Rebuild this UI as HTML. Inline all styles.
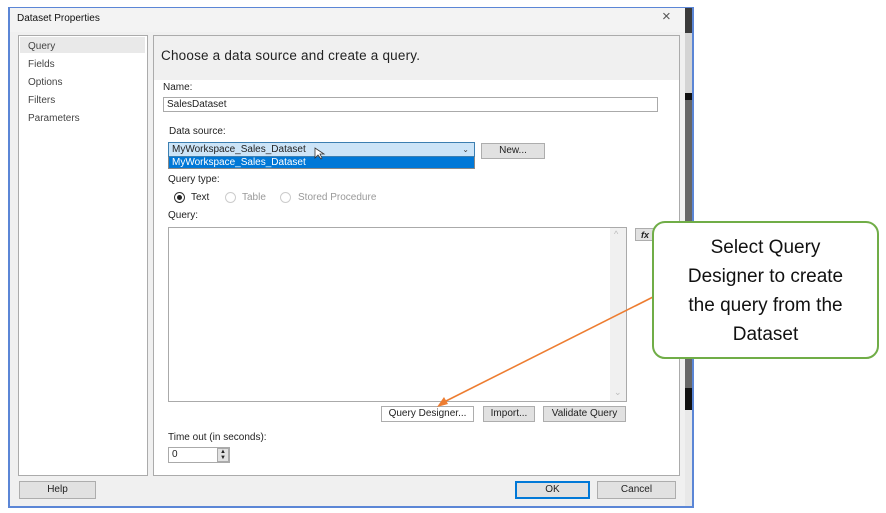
<!DOCTYPE html>
<html><head><style>
*{margin:0;padding:0;box-sizing:border-box}
body{width:886px;height:513px;background:#fff;position:relative;overflow:hidden;font-family:"Liberation Sans",sans-serif;font-size:10px;color:#222}
.a{position:absolute}
.btn{position:absolute;background:#e1e1e1;border:1px solid #adadad;text-align:center;font-size:10px;line-height:14px;color:#222}
.rad{position:absolute;width:11px;height:11px;border:1px solid #ccc;border-radius:50%;background:#fff}
</style></head><body>
<div class="a" style="left:8px;top:7px;width:686px;height:501px;border:2px solid #5b86d6;border-top-width:1px;background:#f0f0f0"></div>
<div class="a" style="left:10px;top:8px;width:675px;height:24px;background:#f3f3f3"></div>
<div class="a" style="left:17px;top:13px;font-size:10px;color:#111">Dataset Properties</div>
<div class="a" style="left:662px;top:8px;font-size:15px;color:#555">×</div>
<div class="a" style="left:685px;top:8px;width:7px;height:25px;background:#3a3a3a"></div>
<div class="a" style="left:685px;top:33px;width:7px;height:60px;background:#d4d4d4"></div>
<div class="a" style="left:685px;top:93px;width:7px;height:7px;background:#111"></div>
<div class="a" style="left:685px;top:100px;width:7px;height:288px;background:#666"></div>
<div class="a" style="left:685px;top:388px;width:7px;height:22px;background:#111"></div>
<div class="a" style="left:685px;top:410px;width:7px;height:96px;background:#e8e8e8"></div>
<div class="a" style="left:18px;top:35px;width:130px;height:441px;background:#fff;border:1px solid #ababab"></div>
<div class="a" style="left:20px;top:37px;width:125px;height:16px;background:#e9e9e9"></div>
<div class="a" style="left:28px;top:38px;line-height:18px;color:#444">Query<br>Fields<br>Options<br>Filters<br>Parameters</div>
<div class="a" style="left:153px;top:35px;width:527px;height:441px;background:#fff;border:1px solid #ababab"></div>
<div class="a" style="left:154px;top:36px;width:525px;height:44px;background:#f0f0f0"></div>
<div class="a" style="left:161px;top:48px;font-size:13.5px;color:#222;letter-spacing:0.2px">Choose a data source and create a query.</div>
<div class="a" style="left:163px;top:82px">Name:</div>
<div class="a" style="left:163px;top:97px;width:495px;height:15px;border:1px solid #aaa;background:#fff;padding-left:3px;line-height:13px">SalesDataset</div>
<div class="a" style="left:169px;top:126px">Data source:</div>
<div class="a" style="left:168px;top:142px;width:307px;height:15px;border:1px solid #3c7fb1;background:#cce4f7;padding-left:3px;line-height:13px">MyWorkspace_Sales_Dataset<span style="position:absolute;right:5px;top:0;color:#444;font-size:8px">⌄</span></div>
<div class="a" style="left:168px;top:157px;width:307px;height:12px;background:#0078d7;color:#fff;padding-left:3px;line-height:12px;border:1px solid #888;border-top:none">MyWorkspace_Sales_Dataset</div>
<svg class="a" style="left:314px;top:147px" width="12" height="14"><path d="M1 1 L1 11 L4 8 L7 12 L8 11 L6 7 L10 7 Z" fill="#fff" stroke="#333" stroke-width="0.8"/></svg>
<div class="btn" style="left:481px;top:143px;width:64px;height:16px">New...</div>
<div class="a" style="left:168px;top:174px">Query type:</div>
<div class="rad" style="left:174px;top:192px;border-color:#333"><div style="position:absolute;left:2px;top:2px;width:5px;height:5px;border-radius:50%;background:#222"></div></div>
<div class="a" style="left:191px;top:192px">Text</div>
<div class="rad" style="left:225px;top:192px"></div>
<div class="a" style="left:242px;top:192px;color:#999">Table</div>
<div class="rad" style="left:280px;top:192px"></div>
<div class="a" style="left:298px;top:192px;color:#999">Stored Procedure</div>
<div class="a" style="left:168px;top:210px">Query:</div>
<div class="a" style="left:168px;top:227px;width:459px;height:175px;border:1px solid #aaa;background:#fff"></div>
<div class="a" style="left:610px;top:228px;width:16px;height:173px;background:#f0f0f0"></div>
<div class="a" style="left:614px;top:229px;color:#bbb;font-size:9px">^</div>
<div class="a" style="left:614px;top:387px;color:#bbb;font-size:9px">⌄</div>
<div class="btn" style="left:635px;top:228px;width:20px;height:13px;line-height:12px;font-style:italic;font-weight:bold;font-size:9px">fx</div>
<div class="btn" style="left:381px;top:406px;width:93px;height:16px;background:#fff">Query Designer...</div>
<div class="btn" style="left:483px;top:406px;width:52px;height:16px">Import...</div>
<div class="btn" style="left:543px;top:406px;width:83px;height:16px">Validate Query</div>
<div class="a" style="left:168px;top:432px">Time out (in seconds):</div>
<div class="a" style="left:168px;top:447px;width:62px;height:16px;border:1px solid #aaa;background:#fff;padding-left:3px;line-height:14px">0</div>
<div class="a" style="left:217px;top:448px;width:12px;height:14px;background:#e1e1e1;border:1px solid #aaa;font-size:6px;line-height:6px;text-align:center">▲<br>▼</div>
<div class="btn" style="left:19px;top:481px;width:77px;height:18px;line-height:16px">Help</div>
<div class="btn" style="left:515px;top:481px;width:75px;height:18px;border:2px solid #0078d7;line-height:14px">OK</div>
<div class="btn" style="left:597px;top:481px;width:79px;height:18px;line-height:16px">Cancel</div>
<svg class="a" style="left:0;top:0" width="886" height="513">
<line x1="653" y1="297" x2="444" y2="402" stroke="#ed7d31" stroke-width="1.6"/>
<path d="M437 407 L444 397 L448 404 Z" fill="#ed7d31"/>
</svg>
<div class="a" style="left:652px;top:221px;width:227px;height:138px;border:2px solid #70ad47;border-radius:13px;background:#fff;text-align:center;font-size:19px;line-height:29px;padding-top:10px;color:#111">Select Query<br>Designer to create<br>the query from the<br>Dataset</div>
</body></html>
